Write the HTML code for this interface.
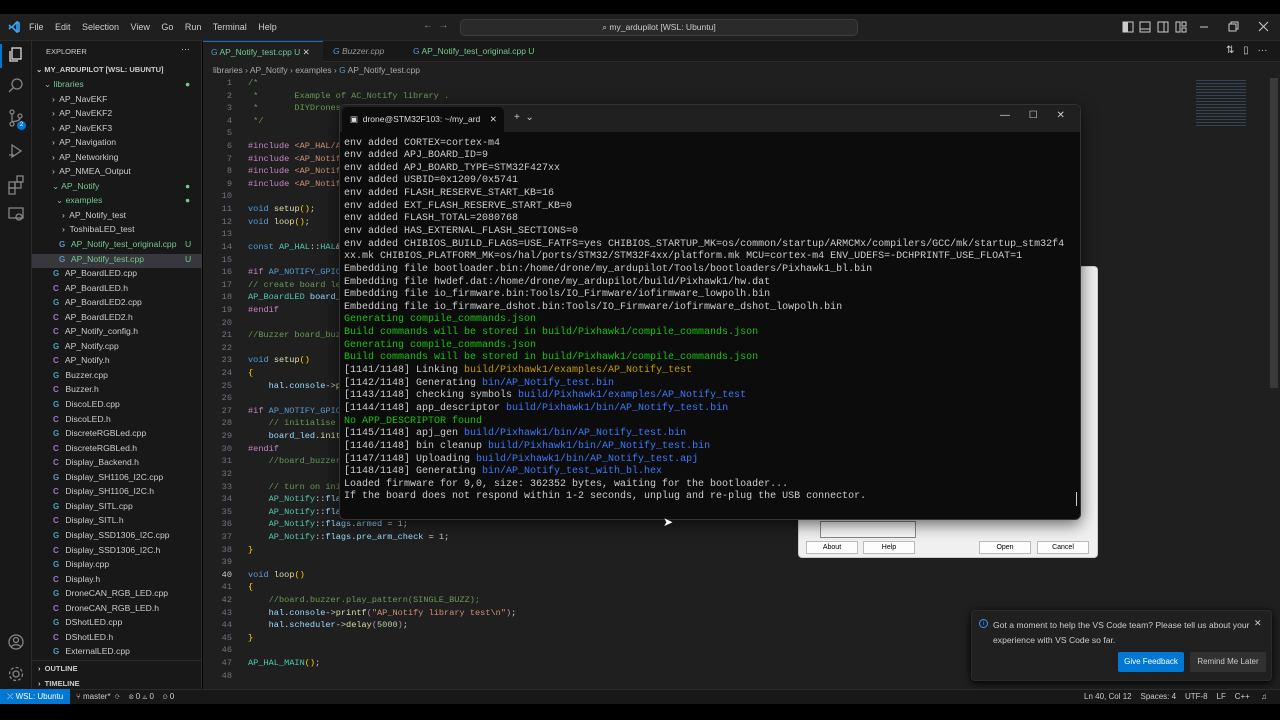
<!DOCTYPE html>
<html><head><meta charset="utf-8"><style>
*{margin:0;padding:0;box-sizing:border-box}
body{width:1280px;height:720px;background:#000;position:relative;overflow:hidden;font-family:"Liberation Sans",sans-serif;color:#ccc}
.a{position:absolute}
.mono{font-family:"Liberation Mono",monospace}
#side div{height:14.55px;line-height:14.55px;font-size:8.6px;white-space:nowrap;position:relative}
#code div{height:12.62px;line-height:12.62px;white-space:pre}
#ln div{height:12.62px;line-height:12.62px;text-align:right}
#term div{height:12.65px;line-height:12.65px;white-space:pre}
.k{color:#569cd6}.f{color:#dcdcaa}.c{color:#6a9955}.p{color:#c586c0}.t{color:#4ec9b0}.s{color:#ce9178}.n{color:#b5cea8}.v{color:#9cdcfe}.y{color:#ffd700}
.g{color:#16c60c}.b{color:#3b78ff}.o{color:#c19c00}
.ic{display:inline-block;width:10px;font-size:8px;font-weight:bold}
.cp{color:#519aba}.ch{color:#a074c4}
</style></head><body>
<!-- title bar -->
<div class="a" style="left:0;top:14px;width:1280px;height:27px;background:#1f1f1f;border-bottom:1px solid #2b2b2b"></div>
<svg class="a" style="left:8px;top:21px" width="12" height="12" viewBox="0 0 12 12"><path d="M9 1L4 6l5 5V1zM9 1l2 1v8l-2 1M1 4l2 2-2 2" stroke="#3ca3f0" stroke-width="1.6" fill="none"/></svg>
<div class="a" style="left:29px;top:22px;font-size:9px;color:#ccc;word-spacing:9px;white-space:nowrap">File Edit Selection View Go Run Terminal Help</div>
<div class="a" style="left:423px;top:20px;font-size:10px;color:#888">← &nbsp;→</div>
<div class="a" style="left:460px;top:19px;width:398px;height:17px;border:1px solid #3c3c3c;border-radius:5px;background:#2a2a2a;font-size:8.5px;line-height:15px;text-align:center;color:#ccc">⌕ my_ardupilot [WSL: Ubuntu]</div>
<svg class="a" style="left:1120px;top:21px" width="150" height="13" viewBox="0 0 150 13" fill="none" stroke="#ccc" stroke-width="1"><rect x="3" y="1" width="10" height="10"/><rect x="3.5" y="1.5" width="4" height="9" fill="#ccc"/><rect x="20" y="1" width="10" height="10"/><path d="M20 8h10"/><rect x="38" y="1" width="10" height="10"/><path d="M44 1v10"/><rect x="56" y="1" width="4" height="10"/><rect x="62" y="1" width="4" height="4"/><rect x="62" y="7" width="4" height="4"/><path d="M80 6h8"/><rect x="109" y="3" width="7" height="7"/><path d="M111 3V1h7v7h-2"/><path d="M139 1l9 9M148 1l-9 9"/></svg>
<!-- activity bar -->
<div class="a" style="left:0;top:41px;width:32px;height:649px;background:#181818;border-right:1px solid #2b2b2b"></div>
<div class="a" style="left:0;top:44px;width:2px;height:24px;background:#0078d4"></div>
<svg class="a" style="left:7px;top:45px" width="18" height="180" viewBox="0 0 18 180" fill="none" stroke="#858585" stroke-width="1.3">
<rect x="5" y="3" width="9" height="11" stroke="#ddd"/><path d="M3 6v10h8" stroke="#ddd"/>
<circle cx="10" cy="39" r="5"/><path d="M6 43l-4 4"/>
<circle cx="5" cy="67" r="2"/><circle cx="5" cy="79" r="2"/><circle cx="13" cy="71" r="2"/><path d="M5 69v8M13 73c0 4-8 3-8 4"/>
<path d="M5 100l9 6-9 6zM2 110h5"/>
<rect x="2" y="137" width="6" height="6"/><rect x="8" y="137" width="6" height="6"/><rect x="2" y="143" width="6" height="6"/><rect x="10" y="131" width="6" height="6"/>
<rect x="2" y="163" width="14" height="10"/><circle cx="12" cy="172" r="3"/>
</svg>
<div class="a" style="left:17px;top:121px;width:9px;height:9px;border-radius:50%;background:#0078d4;font-size:6px;color:#fff;text-align:center;line-height:9px">2</div>
<svg class="a" style="left:7px;top:633px" width="18" height="50" viewBox="0 0 18 50" fill="none" stroke="#858585" stroke-width="1.3"><circle cx="9" cy="9" r="7"/><circle cx="9" cy="7" r="2.5"/><path d="M4 14c2-3 8-3 10 0"/><circle cx="9" cy="41" r="3"/><circle cx="9" cy="41" r="6.5" stroke-dasharray="3 2"/></svg>
<!-- sidebar -->
<div class="a" style="left:32px;top:41px;width:170px;height:649px;background:#181818;border-right:1px solid #2b2b2b"></div>
<div class="a" style="left:46px;top:47px;font-size:7.5px;color:#ccc">EXPLORER</div>
<div class="a" style="left:181px;top:44px;font-size:9px;color:#ccc">···</div>
<div class="a" style="left:36px;top:65px;font-size:7.5px;font-weight:bold;color:#ccc">⌄ MY_ARDUPILOT [WSL: UBUNTU]</div>
<div class="a" style="left:32px;top:254px;width:170px;height:14px;background:#37373d"></div>
<div id="side" class="a" style="left:32px;top:77px;width:170px;height:580px;overflow:hidden">
<div style="padding-left:12px;color:#73c991">⌄ libraries<span style="position:absolute;left:153px;color:#73c991">●</span></div>
<div style="padding-left:20px">›&nbsp; AP_NavEKF</div>
<div style="padding-left:20px">›&nbsp; AP_NavEKF2</div>
<div style="padding-left:20px">›&nbsp; AP_NavEKF3</div>
<div style="padding-left:20px">›&nbsp; AP_Navigation</div>
<div style="padding-left:20px">›&nbsp; AP_Networking</div>
<div style="padding-left:20px">›&nbsp; AP_NMEA_Output</div>
<div style="padding-left:20px;color:#73c991">⌄ AP_Notify<span style="position:absolute;left:153px">●</span></div>
<div style="padding-left:24px;color:#73c991">⌄ examples<span style="position:absolute;left:153px">●</span></div>
<div style="padding-left:30px">›&nbsp; AP_Notify_test</div>
<div style="padding-left:30px">›&nbsp; ToshibaLED_test</div>
<div style="padding-left:27px;color:#73c991"><span class="ic cp">G</span> AP_Notify_test_original.cpp<span style="position:absolute;left:153px">U</span></div>
<div style="padding-left:27px;color:#73c991"><span class="ic cp">G</span> AP_Notify_test.cpp<span style="position:absolute;left:153px">U</span></div>
<div style="padding-left:21px"><span class="ic cp">G</span> AP_BoardLED.cpp</div>
<div style="padding-left:21px"><span class="ic ch">C</span> AP_BoardLED.h</div>
<div style="padding-left:21px"><span class="ic cp">G</span> AP_BoardLED2.cpp</div>
<div style="padding-left:21px"><span class="ic ch">C</span> AP_BoardLED2.h</div>
<div style="padding-left:21px"><span class="ic ch">C</span> AP_Notify_config.h</div>
<div style="padding-left:21px"><span class="ic cp">G</span> AP_Notify.cpp</div>
<div style="padding-left:21px"><span class="ic ch">C</span> AP_Notify.h</div>
<div style="padding-left:21px"><span class="ic cp">G</span> Buzzer.cpp</div>
<div style="padding-left:21px"><span class="ic ch">C</span> Buzzer.h</div>
<div style="padding-left:21px"><span class="ic cp">G</span> DiscoLED.cpp</div>
<div style="padding-left:21px"><span class="ic ch">C</span> DiscoLED.h</div>
<div style="padding-left:21px"><span class="ic cp">G</span> DiscreteRGBLed.cpp</div>
<div style="padding-left:21px"><span class="ic ch">C</span> DiscreteRGBLed.h</div>
<div style="padding-left:21px"><span class="ic ch">C</span> Display_Backend.h</div>
<div style="padding-left:21px"><span class="ic cp">G</span> Display_SH1106_I2C.cpp</div>
<div style="padding-left:21px"><span class="ic ch">C</span> Display_SH1106_I2C.h</div>
<div style="padding-left:21px"><span class="ic cp">G</span> Display_SITL.cpp</div>
<div style="padding-left:21px"><span class="ic ch">C</span> Display_SITL.h</div>
<div style="padding-left:21px"><span class="ic cp">G</span> Display_SSD1306_I2C.cpp</div>
<div style="padding-left:21px"><span class="ic ch">C</span> Display_SSD1306_I2C.h</div>
<div style="padding-left:21px"><span class="ic cp">G</span> Display.cpp</div>
<div style="padding-left:21px"><span class="ic ch">C</span> Display.h</div>
<div style="padding-left:21px"><span class="ic cp">G</span> DroneCAN_RGB_LED.cpp</div>
<div style="padding-left:21px"><span class="ic ch">C</span> DroneCAN_RGB_LED.h</div>
<div style="padding-left:21px"><span class="ic cp">G</span> DShotLED.cpp</div>
<div style="padding-left:21px"><span class="ic ch">C</span> DShotLED.h</div>
<div style="padding-left:21px"><span class="ic cp">G</span> ExternalLED.cpp</div>
</div>
<div class="a" style="left:32px;top:660px;width:170px;height:30px;border-top:1px solid #2b2b2b;font-size:7.5px;font-weight:bold;color:#ccc;line-height:15px;padding-left:6px">›&nbsp; OUTLINE<br>›&nbsp; TIMELINE</div>
<!-- editor -->
<div class="a" style="left:203px;top:41px;width:1077px;height:649px;background:#1f1f1f"></div>
<div class="a" style="left:203px;top:41px;width:1077px;height:21px;background:#181818;border-bottom:1px solid #2b2b2b"></div>
<div class="a" style="left:203px;top:41px;width:120px;height:22px;background:#1f1f1f;border-top:1px solid #0078d4;font-size:8.5px;line-height:20px;padding-left:8px;color:#73c991;white-space:nowrap"><span class="cp">G</span> AP_Notify_test.cpp U <span style="color:#ccc">✕</span></div>
<div class="a" style="left:333px;top:46px;font-size:8.5px;color:#999;font-style:italic"><span class="cp">G</span> Buzzer.cpp</div>
<div class="a" style="left:413px;top:46px;font-size:8.5px;color:#73c991"><span class="cp">G</span> AP_Notify_test_original.cpp U</div>
<div class="a" style="left:1226px;top:45px;font-size:10px;color:#ccc;word-spacing:6px;white-space:nowrap">⇅ ▯ ···</div>
<div class="a" style="left:213px;top:65px;font-size:8.5px;color:#aaa">libraries › AP_Notify › examples › <span class="cp">G</span> AP_Notify_test.cpp</div>
<div id="ln" class="a mono" style="left:205px;top:77px;width:27px;font-size:8.6px;color:#6e7681">
<div>1</div><div>2</div><div>3</div><div>4</div><div>5</div><div>6</div><div>7</div><div>8</div><div>9</div><div>10</div><div>11</div><div>12</div><div>13</div><div>14</div><div>15</div><div>16</div><div>17</div><div>18</div><div>19</div><div>20</div><div>21</div><div>22</div><div>23</div><div>24</div><div>25</div><div>26</div><div>27</div><div>28</div><div>29</div><div>30</div><div>31</div><div>32</div><div>33</div><div>34</div><div>35</div><div>36</div><div>37</div><div>38</div><div>39</div><div style="color:#ccc">40</div><div>41</div><div>42</div><div>43</div><div>44</div><div>45</div><div>46</div><div>47</div><div>48</div></div>
<div id="code" class="a mono" style="left:248px;top:77px;width:940px;font-size:8.6px;color:#d4d4d4">
<div class="c">/*</div><div class="c"> *       Example of AC_Notify library .</div><div class="c"> *       DIYDrones.com</div><div class="c"> */</div><div> </div>
<div><span class="p">#include</span> <span class="s">&lt;AP_HAL/AP_HAL.h&gt;</span></div><div><span class="p">#include</span> <span class="s">&lt;AP_Notify/AP_Notify.h&gt;</span></div><div><span class="p">#include</span> <span class="s">&lt;AP_Notify/AP_BoardLED.h&gt;</span></div><div><span class="p">#include</span> <span class="s">&lt;AP_Notify/Buzzer.h&gt;</span></div><div> </div>
<div><span class="k">void</span> <span class="f">setup</span><span class="y">()</span>;</div><div><span class="k">void</span> <span class="f">loop</span><span class="y">()</span>;</div><div> </div>
<div><span class="k">const</span> <span class="t">AP_HAL</span>::<span class="t">HAL</span>&amp; hal = AP_HAL::get_HAL();</div><div> </div>
<div><span class="p">#if</span> <span class="k">AP_NOTIFY_GPIO_LED_3_ENABLED</span></div><div class="c">// create board led object</div><div><span class="t">AP_BoardLED</span> <span class="v">board_led</span>;</div><div class="p">#endif</div><div> </div>
<div class="c">//Buzzer board_buzzer;</div><div> </div>
<div><span class="k">void</span> <span class="f">setup</span><span class="y">()</span></div><div class="y">{</div><div>    <span class="v">hal</span>.<span class="v">console</span>-&gt;<span class="f">printf</span>()</div><div> </div>
<div><span class="p">#if</span> <span class="k">AP_NOTIFY_GPIO_LED_3_ENABLED</span></div><div class="c">    // initialise</div><div>    <span class="v">board_led</span>.<span class="f">init</span>();</div><div class="p">#endif</div><div class="c">    //board_buzzer.init();</div><div> </div>
<div class="c">    // turn on initialising</div><div>    <span class="t">AP_Notify</span>::<span class="v">flags</span>.<span class="v">initialising</span> = <span class="n">1</span>;</div><div>    <span class="t">AP_Notify</span>::<span class="v">flags</span>.<span class="v">gps_status</span> = <span class="n">1</span>;</div><div>    <span class="t">AP_Notify</span>::<span class="v">flags</span>.<span class="v">armed</span> = <span class="n">1</span>;</div><div>    <span class="t">AP_Notify</span>::<span class="v">flags</span>.<span class="v">pre_arm_check</span> = <span class="n">1</span>;</div><div class="y">}</div><div> </div>
<div><span class="k">void</span> <span class="f">loop</span><span class="y">()</span></div><div class="y">{</div><div class="c">    //board.buzzer.play_pattern(SINGLE_BUZZ);</div><div>    <span class="v">hal</span>.<span class="v">console</span>-&gt;<span class="f">printf</span><span class="p">(</span><span class="s">"AP_Notify library test\n"</span><span class="p">)</span>;</div><div>    <span class="v">hal</span>.<span class="v">scheduler</span>-&gt;<span class="f">delay</span><span class="p">(</span><span class="n">5000</span><span class="p">)</span>;</div><div class="y">}</div><div> </div>
<div><span class="t">AP_HAL_MAIN</span><span class="y">()</span>;</div><div> </div></div>
<!-- minimap -->
<div class="a" style="left:1196px;top:78px;width:50px;height:50px;opacity:.5;background:repeating-linear-gradient(#1f1f1f 0 2px,#4a6a8a 2px 3px)"></div>
<div class="a" style="left:1270px;top:78px;width:8px;height:310px;background:#3a3a3a"></div>
<!-- dialog behind -->
<div class="a" style="left:798px;top:266px;width:300px;height:292px;background:#f0f0f0;border-radius:4px;border:1px solid #ccc"></div>
<div class="a" style="left:820px;top:521px;width:96px;height:17px;border:1px solid #888;background:#f8f8f8"></div>
<div class="a" style="left:806px;top:541px;width:52px;height:13px;border:1px solid #bbb;background:#fdfdfd;font-size:7px;text-align:center;line-height:11px;color:#000">About</div>
<div class="a" style="left:863px;top:541px;width:52px;height:13px;border:1px solid #bbb;background:#fdfdfd;font-size:7px;text-align:center;line-height:11px;color:#000">Help</div>
<div class="a" style="left:979px;top:541px;width:52px;height:13px;border:1px solid #bbb;background:#fdfdfd;font-size:7px;text-align:center;line-height:11px;color:#000">Open</div>
<div class="a" style="left:1037px;top:541px;width:52px;height:13px;border:1px solid #bbb;background:#fdfdfd;font-size:7px;text-align:center;line-height:11px;color:#000">Cancel</div>
<!-- terminal -->
<div class="a" style="left:339px;top:104px;width:742px;height:416px;background:#0c0c0c;border:1px solid #333;border-radius:6px;box-shadow:0 4px 16px rgba(0,0,0,.6)"></div>
<div class="a" style="left:340px;top:105px;width:740px;height:27px;background:#202020;border-radius:6px 6px 0 0"></div>
<div class="a" style="left:342px;top:107px;width:162px;height:25px;background:#0c0c0c;border-radius:5px 5px 0 0;font-size:8.5px;line-height:24px;padding-left:8px;color:#ddd;white-space:nowrap">▣ &nbsp;drone@STM32F103: ~/my_ard &nbsp;&nbsp;&nbsp;✕</div>
<div class="a" style="left:514px;top:112px;font-size:10px;color:#ccc;white-space:nowrap">+ &nbsp;⌄</div>
<div class="a" style="left:1000px;top:110px;font-size:10px;color:#ccc;word-spacing:16px;white-space:nowrap">— ☐ ✕</div>
<div id="term" class="a mono" style="left:344px;top:137.5px;width:730px;font-size:10px;color:#ccc">
<div>env added CORTEX=cortex-m4</div><div>env added APJ_BOARD_ID=9</div><div>env added APJ_BOARD_TYPE=STM32F427xx</div><div>env added USBID=0x1209/0x5741</div><div>env added FLASH_RESERVE_START_KB=16</div><div>env added EXT_FLASH_RESERVE_START_KB=0</div><div>env added FLASH_TOTAL=2080768</div><div>env added HAS_EXTERNAL_FLASH_SECTIONS=0</div>
<div>env added CHIBIOS_BUILD_FLAGS=USE_FATFS=yes CHIBIOS_STARTUP_MK=os/common/startup/ARMCMx/compilers/GCC/mk/startup_stm32f4</div>
<div>xx.mk CHIBIOS_PLATFORM_MK=os/hal/ports/STM32/STM32F4xx/platform.mk MCU=cortex-m4 ENV_UDEFS=-DCHPRINTF_USE_FLOAT=1</div>
<div>Embedding file bootloader.bin:/home/drone/my_ardupilot/Tools/bootloaders/Pixhawk1_bl.bin</div>
<div>Embedding file hwdef.dat:/home/drone/my_ardupilot/build/Pixhawk1/hw.dat</div>
<div>Embedding file io_firmware.bin:Tools/IO_Firmware/iofirmware_lowpolh.bin</div>
<div>Embedding file io_firmware_dshot.bin:Tools/IO_Firmware/iofirmware_dshot_lowpolh.bin</div>
<div class="g">Generating compile_commands.json</div><div class="g">Build commands will be stored in build/Pixhawk1/compile_commands.json</div><div class="g">Generating compile_commands.json</div><div class="g">Build commands will be stored in build/Pixhawk1/compile_commands.json</div>
<div>[1141/1148] Linking <span class="o">build/Pixhawk1/examples/AP_Notify_test</span></div>
<div>[1142/1148] Generating <span class="b">bin/AP_Notify_test.bin</span></div>
<div>[1143/1148] checking symbols <span class="b">build/Pixhawk1/examples/AP_Notify_test</span></div>
<div>[1144/1148] app_descriptor <span class="b">build/Pixhawk1/bin/AP_Notify_test.bin</span></div>
<div class="g">No APP_DESCRIPTOR found</div>
<div>[1145/1148] apj_gen <span class="b">build/Pixhawk1/bin/AP_Notify_test.bin</span></div>
<div>[1146/1148] bin cleanup <span class="b">build/Pixhawk1/bin/AP_Notify_test.bin</span></div>
<div>[1147/1148] Uploading <span class="b">build/Pixhawk1/bin/AP_Notify_test.apj</span></div>
<div>[1148/1148] Generating <span class="b">bin/AP_Notify_test_with_bl.hex</span></div>
<div>Loaded firmware for 9,0, size: 362352 bytes, waiting for the bootloader...</div>
<div>If the board does not respond within 1-2 seconds, unplug and re-plug the USB connector.</div></div>
<div class="a" style="left:1076px;top:492px;width:1px;height:14px;background:#ccc"></div>
<div class="a" style="left:663px;top:515px;font-size:12px;color:#fff">➤</div>
<!-- notification -->
<div class="a" style="left:971px;top:610px;width:301px;height:71px;background:#202020;border:1px solid #2b2b2b;border-radius:4px;box-shadow:0 2px 8px #000"></div>
<div class="a" style="left:979px;top:619px;width:9px;height:9px;border:1px solid #3794ff;border-radius:50%;font-size:6px;color:#3794ff;text-align:center;line-height:8px">i</div>
<div class="a" style="left:993px;top:618px;font-size:8.6px;color:#ccc;line-height:15px;width:262px">Got a moment to help the VS Code team? Please tell us about your experience with VS Code so far.</div>
<div class="a" style="left:1254px;top:618px;font-size:9px;color:#ccc">✕</div>
<div class="a" style="left:1118px;top:652px;width:66px;height:20px;background:#0078d4;border-radius:2px;font-size:8px;color:#fff;text-align:center;line-height:20px">Give Feedback</div>
<div class="a" style="left:1190px;top:652px;width:76px;height:20px;background:#313131;border-radius:2px;font-size:8px;color:#ccc;text-align:center;line-height:20px">Remind Me Later</div>
<!-- status bar -->
<div class="a" style="left:0;top:689px;width:1280px;height:15px;background:#181818;border-top:1px solid #2b2b2b"></div>
<div class="a" style="left:0;top:689px;width:70px;height:15px;background:#0078d4;font-size:8px;color:#fff;line-height:15px;padding-left:7px;white-space:nowrap">⤫ WSL: Ubuntu</div>
<div class="a" style="left:76px;top:689px;font-size:8px;color:#ccc;line-height:15px;white-space:pre">⑂ master*  ⟳    ⊗ 0 ⚠ 0    ⚇ 0</div>
<div class="a" style="left:1084px;top:689px;font-size:8px;color:#ccc;line-height:15px;white-space:pre">Ln 40, Col 12    Spaces: 4    UTF-8    LF    C++     ♫</div>
</body></html>
